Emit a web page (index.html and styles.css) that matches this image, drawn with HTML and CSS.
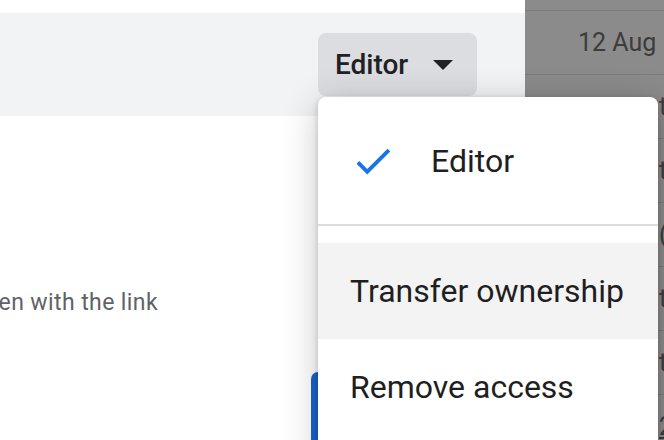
FILE: index.html
```html
<!DOCTYPE html>
<html lang="en">
<head>
<meta charset="utf-8">
<title>Share dialog – role menu</title>
<link rel="stylesheet" href="styles.css">
</head>
<body>
<div class="screen">
  <div class="dialog">
    <div class="top-strip"></div>
    <div class="access-row">
      <button class="role-btn" type="button">
        <span class="role-label">Editor</span>
        <svg class="caret" viewBox="0 0 20 10" width="20" height="10" aria-hidden="true"><path d="M0 0h20L10 10z" fill="#202124"/></svg>
      </button>
    </div>
    <div class="dialog-body">
      <div class="link-note"><span>Only people with access can open with the link</span></div>
      <div class="footer"><div class="primary-btn"></div></div>
    </div>
  </div>

  <div class="backdrop">
    <div class="bd-row bd-first"></div>
    <div class="bd-row"><span class="bd-date">12 Aug</span></div>
    <div class="bd-row"><span class="bd-edge">to</span></div>
    <div class="bd-row"><span class="bd-edge">to</span></div>
    <div class="bd-row"><span class="bd-edge">(</span></div>
    <div class="bd-row"><span class="bd-edge">to</span></div>
    <div class="bd-row"><span class="bd-edge">to</span></div>
    <div class="bd-row"><span class="bd-edge bd-link">2</span></div>
  </div>

  <div class="menu" role="menu">
    <div class="menu-item selected" role="menuitemradio" aria-checked="true">
      <svg class="check" viewBox="0 0 24 24" width="46" height="46" aria-hidden="true"><path d="M9 16.17L4.83 12l-1.42 1.41L9 19 21 7l-1.41-1.41z" fill="#1a73e8"/></svg>
      <span>Editor</span>
    </div>
    <div class="menu-divider"></div>
    <div class="menu-item hovered" role="menuitem"><span>Transfer ownership</span></div>
    <div class="menu-item" role="menuitem"><span>Remove access</span></div>
  </div>
</div>
</body>
</html>
```

FILE: styles.css
```css
* { box-sizing: border-box; }

html, body {
  margin: 0;
  padding: 0;
  width: 664px;
  height: 440px;
  overflow: hidden;
  background: #ffffff;
  font-family: Roboto, "Noto Sans", Arial, sans-serif;
}

.screen {
  position: relative;
  display: flex;
  width: 664px;
  height: 440px;
  overflow: hidden;
}

/* ---------- dialog (left) ---------- */
.dialog {
  width: 525px;
  flex: none;
  display: flex;
  flex-direction: column;
  background: #ffffff;
}

.top-strip {
  flex: none;
  height: 13px;
  background: #ffffff;
}

.access-row {
  flex: none;
  height: 103px;
  background: #f1f3f4;
  display: flex;
  justify-content: flex-end;
  align-items: flex-start;
  padding: 20px 48px 0 0;
}

.role-btn {
  width: 159px;
  height: 63px;
  border: none;
  border-radius: 8px;
  background: #dcdde0;
  display: flex;
  align-items: center;
  padding: 0 24px 0 17px;
  font-family: Roboto, "Noto Sans", Arial, sans-serif;
  font-size: 28px;
  font-weight: 500;
  color: #202124;
  cursor: pointer;
}

.role-label { flex: 1; text-align: left; }
.caret { flex: none; }

.dialog-body {
  flex: none;
  display: flex;
  flex-direction: column;
}

.link-note {
  flex: none;
  margin-top: 173px;
  width: 158px;
  display: flex;
  justify-content: flex-end;
  overflow: hidden;
  white-space: nowrap;
  font-size: 23px;
  letter-spacing: 0.4px;
  line-height: 28px;
  color: #5f6368;
}

.footer {
  flex: none;
  margin-top: 55px;
  padding-left: 311px;
}

.primary-btn {
  width: 140px;
  height: 90px;
  border-radius: 7px;
  background: #1a63d1;
}

/* ---------- backdrop (right) ---------- */
.backdrop {
  flex: 1;
  background: #8b8b8b;
  display: flex;
  flex-direction: column;
  overflow: hidden;
}

.bd-row {
  flex: none;
  height: 64px;
  border-bottom: 1px solid #7b7b7b;
  display: flex;
  align-items: center;
  white-space: nowrap;
  font-size: 25px;
  color: #3c3c3c;
}

.bd-first { height: 11px; }

.bd-date { padding-left: 53px; }
.bd-edge { padding-left: 134px; }
.bd-link { text-decoration: underline; }

/* ---------- role menu (popup) ---------- */
.menu {
  position: absolute;
  left: 318px;
  top: 97px;
  width: 340px;
  height: 370px;
  background: #ffffff;
  border-radius: 8px;
  box-shadow: 0 2px 6px rgba(0, 0, 0, 0.18), 0 6px 36px rgba(0, 0, 0, 0.22);
  display: flex;
  flex-direction: column;
  overflow: hidden;
}

.menu-item {
  flex: none;
  height: 96px;
  display: flex;
  align-items: center;
  padding-left: 32px;
  font-size: 32px;
  color: #1f1f1f;
}

.menu-item.selected {
  height: 127px;
  gap: 35px;
}

.check { flex: none; }

.menu-divider {
  flex: none;
  height: 2px;
  background: #dadce0;
  margin-bottom: 17px;
}

.menu-item.hovered { background: #f3f3f3; }
```
